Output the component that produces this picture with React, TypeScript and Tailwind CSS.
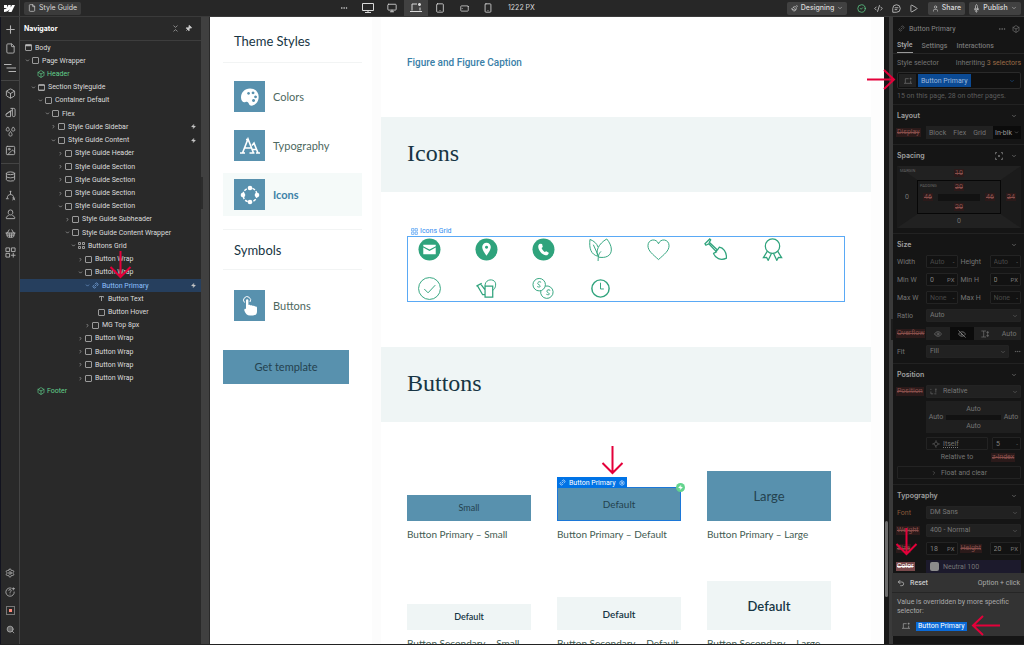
import type { ReactNode } from "react";
import {
  Box,
  ChevronDown,
  ChevronRight,
  CircleCheck,
  CodeXml,
  Database,
  Ellipsis,
  Eye,
  EyeOff,
  File,
  Image,
  Link2,
  Monitor,
  Paintbrush,
  Pin,
  Play,
  Plus,
  Rocket,
  Search,
  Settings,
  ShoppingBasket,
  Smartphone,
  Tablet,
  Undo2,
  User,
  Zap,
} from "lucide-react";

type NodeKind = "body" | "section" | "box" | "component" | "grid" | "link" | "text";

type TreeNode = {
  name: string;
  level: number;
  kind: NodeKind;
  open?: boolean;
  bolt?: boolean;
  selected?: boolean;
};

const tree: TreeNode[] = [
  { name: "Body", level: 0, kind: "body" },
  { name: "Page Wrapper", level: 1, kind: "box", open: true },
  { name: "Header", level: 2, kind: "component" },
  { name: "Section Styleguide", level: 2, kind: "section", open: true },
  { name: "Container Default", level: 3, kind: "box", open: true },
  { name: "Flex", level: 4, kind: "box", open: true },
  { name: "Style Guide Sidebar", level: 5, kind: "box", open: false, bolt: true },
  { name: "Style Guide Content", level: 5, kind: "box", open: true, bolt: true },
  { name: "Style Guide Header", level: 6, kind: "box", open: false },
  { name: "Style Guide Section", level: 6, kind: "box", open: false },
  { name: "Style Guide Section", level: 6, kind: "box", open: false },
  { name: "Style Guide Section", level: 6, kind: "box", open: false },
  { name: "Style Guide Section", level: 6, kind: "box", open: true },
  { name: "Style Guide Subheader", level: 7, kind: "box", open: false },
  { name: "Style Guide Content Wrapper", level: 7, kind: "box", open: true },
  { name: "Buttons Grid", level: 8, kind: "grid", open: true },
  { name: "Button Wrap", level: 9, kind: "box", open: false },
  { name: "Button Wrap", level: 9, kind: "box", open: true },
  { name: "Button Primary", level: 10, kind: "link", open: true, bolt: true, selected: true },
  { name: "Button Text", level: 11, kind: "text" },
  { name: "Button Hover", level: 11, kind: "box" },
  { name: "MG Top 8px", level: 10, kind: "box", open: false },
  { name: "Button Wrap", level: 9, kind: "box", open: false },
  { name: "Button Wrap", level: 9, kind: "box", open: false },
  { name: "Button Wrap", level: 9, kind: "box", open: false },
  { name: "Button Wrap", level: 9, kind: "box", open: false },
  { name: "Footer", level: 2, kind: "component" },
];

function NodeIcon({ kind }: { kind: NodeKind }) {
  if (kind === "component") return <Box size={8} className="-mx-px shrink-0" />;
  if (kind === "link") return <Link2 size={7} className="shrink-0 -rotate-45" />;
  return (
    <svg width="7" height="7" viewBox="0 0 14 14" fill="none" stroke="currentColor" strokeWidth="1.6" className="shrink-0 opacity-80">
      {kind === "text" && <path d="M3 5V3h8v2M7 3v9" />}
      {kind === "grid" && <path d="M1 1h4v4H1zM9 1h4v4H9zM1 9h4v4H1zM9 9h4v4H9z" />}
      {(kind === "box" || kind === "section" || kind === "body") && <rect x="1" y="1" width="12" height="12" rx="1" />}
      {kind === "body" && <path d="M1 3h12" strokeWidth="3" />}
      {kind === "section" && <path d="M1 3h12M1 12h12" />}
    </svg>
  );
}

function TreeRow({ node }: { node: TreeNode }) {
  const color = node.selected
    ? "bg-[#263f5e] text-[#8fc1ff]"
    : node.kind === "component"
      ? "text-[#62d08c]"
      : "text-[#dcdcdc]";
  const indent = node.level === 0 ? 5 : Math.round((node.level * 20) / 3) - 2;
  return (
    <li className={`flex min-h-0 ${color}`}>
      <button type="button" className="flex min-w-0 flex-1 items-center text-left whitespace-nowrap" style={{ paddingLeft: indent }}>
        {node.level > 0 && (
          <span className="mr-0.5 w-[5px] shrink-0 opacity-80">
            {node.open === true && <ChevronDown size={5} strokeWidth={3} />}
            {node.open === false && <ChevronRight size={5} strokeWidth={3} />}
          </span>
        )}
        <NodeIcon kind={node.kind} />
        <span className="ml-[3px]">{node.name}</span>
        {node.bolt && <Zap size={5} fill="currentColor" className="mr-[5px] ml-auto text-[#c8c8c8]" />}
      </button>
    </li>
  );
}

function Glyph({ d, size = 11 }: { d: string; size?: number }) {
  return (
    <svg width={size} height={size} viewBox="0 0 24 24" fill="none" stroke="currentColor" strokeWidth="2">
      <path d={d} />
    </svg>
  );
}

const railGroups: { label: string; icon: ReactNode }[][] = [
  [
    { label: "Add elements", icon: <Plus size={13} /> },
    { label: "Pages", icon: <File size={11} /> },
    { label: "Navigator", icon: <Glyph size={12} d="M0 5h15M5 12h19M9 19h15" /> },
  ],
  [
    { label: "Components", icon: <Box size={11} /> },
    { label: "Variables", icon: <Glyph d="M12 3h7a3 3 0 0 1 3 3v12a3 3 0 0 1-6 0V3M12 8v13H5a3 3 0 0 1-3-3v-2zM2 16l14-9" /> },
    { label: "Style selectors", icon: <Glyph d="M6 2c5 6 4 9 0 9S1 8 6 2zM18 2c5 6 4 9 0 9s-5-3 0-9zM12 12c5 6 4 10 0 10s-5-4 0-10z" /> },
    { label: "Assets", icon: <Image size={11} /> },
  ],
  [
    { label: "CMS", icon: <Database size={11} /> },
    { label: "Logic", icon: <Glyph d="M12 2v8M12 10c-4 0-7 2-7 8M12 10c4 0 7 2 7 8M10 3h4M2 19h6M16 17l6 5M22 17l-6 5" /> },
    { label: "Users", icon: <Glyph d="M12 2a5 5 0 0 1 5 5c0 4-2 6-5 6s-5-2-5-6a5 5 0 0 1 5-5zM8 13l-5 5v3h18v-3l-5-5" /> },
    { label: "Ecommerce", icon: <ShoppingBasket size={11} /> },
    { label: "Apps", icon: <Glyph d="M2 2h8v8H2zM14 2h8v8h-8zM2 14h8v8H2zM18 13v10M13 18h10" /> },
  ],
];

function RailButton({ label, children }: { label: string; children: ReactNode }) {
  return (
    <button type="button" aria-label={label} className="flex h-[19px] w-full items-center justify-center">
      {children}
    </button>
  );
}

function Rail() {
  return (
    <nav className="flex w-5 shrink-0 flex-col border-r border-[#444] border-l border-l-[#12131f] bg-[#292929] text-[#b4b4b4]">
      {railGroups.map((group, i) => (
        <div key={i} className={`py-[3px] ${i < 2 ? "border-b border-[#444]" : ""}`}>
          {group.map((item) => (
            <RailButton key={item.label} label={item.label}>
              {item.icon}
            </RailButton>
          ))}
        </div>
      ))}
      <div className="mt-auto pb-[5px]">
        <RailButton label="Settings">
          <Settings size={10} />
        </RailButton>
        <RailButton label="Help">
          <Glyph size={10} d="M16 3a10 10 0 1 0 6 8M9 9c0-4 6-4 6 0 0 2-3 2-3 5M12 16v2M20 1v7M17 4h7" />
        </RailButton>
        <RailButton label="Record">
          <svg width="9" height="9" viewBox="0 0 9 9">
            <rect x="0.5" y="0.5" width="8" height="8" fill="none" stroke="#777" />
            <rect x="3" y="3" width="3" height="3" fill="#ff8a7a" />
          </svg>
        </RailButton>
        <RailButton label="Search">
          <Search size={9} fill="#666" />
        </RailButton>
      </div>
    </nav>
  );
}

function Navigator() {
  return (
    <aside className="w-[181px] shrink-0 bg-[#292929]">
      <header className="flex h-6 items-center border-b border-[#3d3d3d] px-1 text-white">
        <h2 className="font-['Inter',sans-serif] text-[7px] font-bold">Navigator</h2>
        <button type="button" aria-label="Collapse all" className="ml-auto text-[#ccc]">
          <Glyph size={7} d="M5 2l7 6 7-6M5 22l7-6 7 6" />
        </button>
        <button type="button" aria-label="Pin panel" className="mr-[5px] ml-1.5 text-[#ccc]">
          <Pin size={7} fill="currentColor" className="rotate-45" />
        </button>
      </header>
      <ul className="grid h-[357px] auto-rows-fr">
        {tree.map((node, i) => (
          <TreeRow key={i} node={node} />
        ))}
      </ul>
    </aside>
  );
}

function TopBar() {
  const device = "flex h-full w-6 items-center justify-center";
  const pill = "flex h-[13px] items-center rounded-[2px] bg-[#414141] font-medium";
  return (
    <header className="flex h-[17px] shrink-0 items-center border-b border-[#3a3a3a] bg-[#272727] font-['Inter',sans-serif] text-[#d9d9d9]">
      <div className="flex w-[332px] shrink-0 items-center">
        <a href="#" aria-label="Dashboard" className="flex h-4 w-5 items-center justify-center border-r border-[#444]">
          <svg width="11" height="7" viewBox="0 0 22 14" fill="#fff">
            <path d="M22 0l-7 14H8.400l3-5.700C9 11.500 5.200 13.700 0 14V8.400s3.500-.2 5.500-2.400H0V0h6.200v5.100L8.700 0h4.700v5.100L16 0z" />
          </svg>
        </a>
        <button type="button" className="ml-1 flex h-[13px] items-center gap-[3px] rounded-[2px] bg-[#3b3b3b] px-1">
          <File size={8} />
          Style Guide
        </button>
      </div>
      <button type="button" aria-label="More" className={device}><Ellipsis size={8} /></button>
      <button type="button" aria-label="Large desktop" className={device}>
        <Glyph size={12} d="M1 3h22v14H1zM12 17v4M6 21h12" />
      </button>
      <button type="button" aria-label="Desktop" className={device}><Monitor size={10} /></button>
      <button type="button" aria-label="Base breakpoint" className={`${device} bg-[#414141]`}>
        <Glyph size={12} d="M14 4H4v13M20 11v6M0 19h24M19 2v6M16 5h6M17 3l4 4M21 3l-4 4" />
      </button>
      <button type="button" aria-label="Tablet" className={device}><Tablet size={10} /></button>
      <button type="button" aria-label="Mobile landscape" className={device}><Smartphone size={9} className="rotate-90" /></button>
      <button type="button" aria-label="Mobile portrait" className={device}><Smartphone size={10} /></button>
      <span className="ml-2 whitespace-nowrap">1222 PX</span>
      <div className="ml-auto flex items-center pr-[3px]">
        <button type="button" className={`${pill} w-[60px] justify-center gap-[3px]`}>
          <Paintbrush size={7} />
          Designing
          <ChevronDown size={6} />
        </button>
        <button type="button" aria-label="Audit" className="ml-[10px] text-[#5fd18b]"><CircleCheck size={9} /></button>
        <button type="button" aria-label="Export code" className="ml-2"><CodeXml size={9} /></button>
        <button type="button" aria-label="Comments" className="ml-[9px]">
          <Glyph size={9} d="M2 22V12A10 10 0 1 1 12 22zM7 10h10M7 15h7" />
        </button>
        <button type="button" aria-label="Preview" className="ml-2"><Play size={9} /></button>
        <button type="button" className={`${pill} ml-[10px] w-[37px] justify-center gap-[3px]`}>
          <User size={7} />
          Share
        </button>
        <button type="button" className={`${pill} ml-1 w-[52px] justify-center gap-[3px]`}>
          <Rocket size={7} className="-rotate-45" />
          Publish
          <ChevronDown size={6} />
        </button>
      </div>
    </header>
  );
}

function GuideLink({ label, active, children }: { label: string; active?: boolean; children: ReactNode }) {
  return (
    <a href="#" className={`flex h-[43px] items-center pl-[11px] text-[11px] ${active ? "bg-[#f5faf9] font-bold text-[#3d82a8]" : "text-[#4d6860]"}`}>
      <span className="mr-2 flex size-[31px] items-center justify-center bg-[#5891ae]">
        <svg width="20" height="20" viewBox="0 0 20 20" fill="#fff">
          {children}
        </svg>
      </span>
      {label}
    </a>
  );
}

function GuideSidebar() {
  return (
    <aside className="w-[171px] shrink-0 border-r-[9px] border-[#fcfcfc] pl-[13px]">
      <div className="pr-[10px]">
        <h2 className="flex h-[46px] items-center border-b border-[#f2f4f4] pt-[3px] pl-[11px] text-[13px] text-[#173544]">Theme Styles</h2>
        <nav className="mt-3 flex flex-col gap-1.5">
          <GuideLink label="Colors">
            <path fillRule="evenodd" d="M10 1.500C4.500 1.500 1 5.500 1 10.500c0 3.500 2.500 5.500 4.500 4.500 2-.800 3 .5 3.500 2 .8 2.500 4.500 2 7-.5C21 11.500 19 1.500 10 1.500zM8.500 5a1.400 1.400 0 1 0 .1 0zM13 4.500a1.400 1.400 0 1 0 .1 0zM15.500 8.500a1.400 1.400 0 1 0 .1 0zM13.500 12a1.500 1.500 0 1 0 .1 0z" />
          </GuideLink>
          <GuideLink label="Typography">
            <path fill="none" stroke="#fff" strokeWidth="1.600" d="M0 17h5M2.500 17L8 3l5.500 14M4.500 12h7M9.500 17h5M12 9.500L14 7l4 10M12.500 13.500h4M16 17h4M6 3.500h2.500" />
          </GuideLink>
          <GuideLink label="Icons" active>
            <circle cx="10" cy="10" r="7" fill="none" stroke="#fff" strokeWidth="1.500" strokeDasharray="3 1.400" />
            <circle cx="10" cy="3" r="2.300" />
            <circle cx="10" cy="17" r="2.300" />
            <circle cx="3" cy="10" r="2.300" />
            <circle cx="17" cy="10" r="2.300" />
          </GuideLink>
        </nav>
        <h2 className="mt-[13px] mb-[14px] flex h-[41px] items-center border-y border-[#f2f4f4] pl-[11px] text-[13px] text-[#173544]">Symbols</h2>
        <GuideLink label="Buttons">
          <path fill="none" stroke="#fff" d="M4.500 6.500a3.500 3.500 0 1 1 5.500-.500" />
          <path d="M6 4.500a1.200 1.200 0 0 1 2.400 0V9c.8-.600 2-.400 2.300.4.8-.500 1.900-.300 2.200.6.900-.400 1.900-.200 2.100.5.900-.300 2 .100 2 1.200v3.800c0 2.500-1.500 4-4 4h-3c-3 0-4.500-2-5.500-4.500-.6-1.600.3-2.500 1.500-2z" />
        </GuideLink>
      </div>
      <button type="button" className="mt-[23px] h-[34px] w-[126px] bg-[#5891ae] text-[11px] text-[#24424f]">Get template</button>
    </aside>
  );
}

function Badge({ children }: { children: ReactNode }) {
  return (
    <svg viewBox="0 0 24 24" className="size-[23px]">
      <circle cx="12" cy="12" r="11.500" fill="#2fa37c" />
      {children}
    </svg>
  );
}

function Outline({ d, children }: { d?: string; children?: ReactNode }) {
  return (
    <svg viewBox="0 0 24 24" className="size-[23px]" fill="none" stroke="#2fa37c">
      {d && <path d={d} />}
      {children}
    </svg>
  );
}

function IconsGrid() {
  return (
    <div className="relative border border-[#5aa9f5] py-px pr-[60px] pl-2.5">
      <span className="absolute -top-[11px] left-[3px] flex items-center gap-0.5 font-['Roboto',sans-serif] text-[7px] leading-[10px] text-[#2f8cf0]">
        <Glyph size={7} d="M2 2h8v8H2zM14 2h8v8h-8zM2 14h8v8H2zM14 14h8v8h-8z" />
        Icons Grid
      </span>
      <div className="grid grid-cols-[repeat(7,23px)] justify-between gap-y-4">
        <Badge>
          <path fill="#fff" d="M5.500 7h13v1.500L12 12 5.500 8.500zM5.500 10L12 13.500 18.500 10v7h-13z" />
        </Badge>
        <Badge>
          <path fill="#fff" fillRule="evenodd" d="M12 5a4.500 4.500 0 0 1 4.500 4.500C16.500 13 12 18.500 12 18.500S7.500 13 7.500 9.500A4.500 4.500 0 0 1 12 5zm0 3a1.600 1.600 0 1 0 .1 0z" />
        </Badge>
        <Badge>
          <path fill="#fff" d="M8.500 6l2 .300.800 3-1.300 1.200c.5 1.500 1.600 2.900 3.200 4l1.700-.800 2.600 1.800c-.2 2-1.500 3-3.500 2.500C10 16.800 6.800 13 6.500 9c0-1.500.8-2.800 2-3z" />
        </Badge>
        <Outline d="M9 19C2 17 0 11 1 1.500c4 1.500 7 4 8.500 8M10 20C6 14 10 6 18.500 1c6 7 6.500 15 1 18-3 1.500-6 1.500-9.500 1zM9.500 24c0-6 1-8 3-10M9.500 18L4.500 7" />
        <Outline d="M12 22.500C6 17 1 13.500 1 8c0-7 9-8 11-2 2-6 11-5 11 2 0 5.500-5 9-11 14.500z" />
        <Outline>
          <path strokeWidth="1.300" d="M1 6l5-5 1 1-1.500 2.500 8.500 8 2-3c4 .500 7.500 5 7.500 11.500-6 3-12 0-13.500-5l3-1.500-8-8.500L2 7.500zM13.500 12.500L12 14.500" />
        </Outline>
        <Outline>
          <path strokeWidth="1.300" d="M6.500 14L2.500 20.500l3.300-.2 1.700 3 3.500-7.300M17.500 14l4 6.500-3.300-.2-1.700 3-3.500-7.300" />
          <circle cx="12" cy="8.500" r="7.500" strokeWidth="1.300" />
        </Outline>
        <Outline d="M6.500 12.500l4 4 7.500-8">
          <circle cx="12" cy="12" r="11.400" />
        </Outline>
        <Outline>
          <path strokeWidth="1.300" d="M10.500 9.500h8V21h-8zM2.500 9l5.500 9.500h2.500M6 7.500l4.500 6M1.500 9.500l5.500-3" />
          <path d="M10.500 9.500C10 1 22.500 1 21.500 8.500c0 2.500-1.500 4.500-3 5.500" />
        </Outline>
        <Outline d="M9.500 5.500C7 3.500 4.500 7 7 8s2 3.500-1.500 2M19 14c-2.500-2-5 1-2.500 2.200s2 3.300-1.500 1.800">
          <circle cx="7.500" cy="8" r="6.500" />
          <path d="M14 9.500a6.500 6.500 0 1 1-4.800 4.800" />
        </Outline>
        <Outline d="M12 6v6.500h3.500">
          <circle cx="12" cy="12" r="9" strokeWidth="1.500" />
        </Outline>
      </div>
    </div>
  );
}

const samples = [
  { label: "Small", caption: "Button Primary – Small", look: "h-[26px] bg-[#5891ae] text-[9px] text-[#24424f]" },
  { label: "Default", caption: "Button Primary – Default", look: "h-[34px] bg-[#5891ae] text-[10px] text-[#24424f] border border-[#1c78d8]", selected: true },
  { label: "Large", caption: "Button Primary – Large", look: "h-[50px] bg-[#5891ae] text-[13px] text-[#24424f]" },
  { label: "Default", caption: "Button Secondary – Small", look: "h-[26px] bg-[#eff5f5] text-[9px] font-semibold text-[#173544]" },
  { label: "Default", caption: "Button Secondary – Default", look: "h-[33px] bg-[#eff5f5] text-[10px] font-semibold text-[#173544]" },
  { label: "Default", caption: "Button Secondary – Large", look: "h-[49px] bg-[#eff5f5] text-[13px] font-semibold text-[#173544]" },
];

function SelectedTag() {
  return (
    <>
      <span className="absolute -top-2.5 left-0 flex h-[11px] items-center gap-[3px] bg-[#0073e6] px-0.5 font-['Roboto',sans-serif] text-[7px] whitespace-nowrap text-white">
        <Link2 size={7} className="-rotate-45" />
        Button Primary
        <Settings size={6} />
      </span>
      <span className="absolute -top-1 -right-1 flex size-[9px] items-center justify-center rounded-full bg-[#63d48d]">
        <Zap size={5} fill="#fff" stroke="#fff" />
      </span>
    </>
  );
}

function Canvas() {
  const band = "flex h-[75px] items-center bg-[#eff5f5] px-[26px] pb-1 text-2xl text-[#173544] font-['Liberation_Serif',serif]";
  return (
    <main className="flex min-w-0 flex-1 overflow-hidden bg-white font-['Lato',sans-serif]">
      <GuideSidebar />
      <div className="min-w-0 flex-1">
        <p className="flex h-[100px] items-center px-[26px] pb-2 font-['Roboto',sans-serif] text-[10px] font-medium text-[#3a80a8]">Figure and Figure Caption</p>
        <h1 className={band}>Icons</h1>
        <section className="h-[155px] px-[26px] pt-11">
          <IconsGrid />
        </section>
        <h1 className={band}>Buttons</h1>
        <section className="grid grid-cols-3 items-end gap-x-[26px] gap-y-10 px-[26px] pt-[49px] pr-10">
          {samples.map((s) => (
            <figure key={s.caption}>
              <div className="relative">
                <button type="button" className={`block w-full ${s.look}`}>{s.label}</button>
                {s.selected && <SelectedTag />}
              </div>
              <figcaption className="mt-1.5 text-[10px] leading-[14px] whitespace-nowrap text-[#3f5b52]">{s.caption}</figcaption>
            </figure>
          ))}
        </section>
      </div>
      <div className="w-[13px] shrink-0 bg-[#fdfdfd]" />
    </main>
  );
}

const fieldBox = "h-[13px] rounded-[1px] border border-[#232323]";

function Overridden({ htmlFor, children }: { htmlFor?: string; children: ReactNode }) {
  return (
    <label htmlFor={htmlFor} className="-ml-px justify-self-start bg-[#2b1a1a] px-px leading-[9px] text-[#874e4a] line-through">
      {children}
    </label>
  );
}

function Dropdown({ id, value, icon }: { id: string; value: string; icon?: ReactNode }) {
  return (
    <span className="relative flex min-w-0">
      <select id={id} className={`${fieldBox} w-full appearance-none bg-[#212121] leading-[11px] text-[#777] ${icon ? "pl-4" : "pl-[3px]"}`}>
        <option>{value}</option>
      </select>
      {icon && <span className="pointer-events-none absolute top-[3px] left-1">{icon}</span>}
      <ChevronDown size={6} className="pointer-events-none absolute top-1 right-[3px]" />
    </span>
  );
}

function Field({ id, value, unit }: { id: string; value: string; unit: string }) {
  return (
    <span className={`flex min-w-0 items-center bg-[#121212] pr-0.5 pl-[3px] ${fieldBox}`}>
      <input id={id} defaultValue={value} className={`w-full min-w-0 bg-transparent outline-none ${value === "Auto" || value === "None" ? "text-[#484848]" : "text-[#808080]"}`} />
      <span className="text-[6px] text-[#777]">{unit}</span>
    </span>
  );
}

function Section({ title, extra, children }: { title: string; extra?: ReactNode; children: ReactNode }) {
  return (
    <section className="border-b border-[#222] pr-[3px] pb-[5px] pl-1">
      <h3 className="flex h-[21px] items-center font-['Inter',sans-serif] text-[7px] font-semibold text-[#a0a0a0]">
        {title}
        <span className="ml-auto flex items-center gap-2 pr-1">
          {extra}
          <ChevronDown size={6} />
        </span>
      </h3>
      {children}
    </section>
  );
}

function SpacingBox() {
  const mark = "justify-self-center bg-[#2b1a1a] px-px leading-[8px] text-[#874e4a] line-through";
  return (
    <div className="relative grid h-[62px] grid-cols-[20px_1fr_20px] grid-rows-[14px_1fr_14px] place-items-center bg-[#212121]">
      <svg className="absolute inset-0 size-full" viewBox="0 0 124 63" preserveAspectRatio="none">
        <path d="M0 0l20 14v35L0 63zM124 0l-20 14v35l20 14z" fill="#1b1b1b" />
      </svg>
      <span className="relative self-start justify-self-start pt-0.5 pl-[3px] text-[4px] leading-[6px] text-[#666]">MARGIN</span>
      <span className={`relative ${mark}`}>10</span>
      <span />
      <span className="relative">0</span>
      <div className="relative grid size-full grid-cols-[20px_1fr_20px] grid-rows-[12px_1fr_12px] place-items-center border border-[#070707] bg-[#1d1d1d]">
        <span className="self-start justify-self-start pt-0.5 pl-0.5 text-[4px] leading-[5px] text-[#666]">PADDING</span>
        <span className={mark}>20</span>
        <span />
        <span className={mark}>46</span>
        <span className="h-[7px] w-full bg-[#121212]" />
        <span className={mark}>46</span>
        <span />
        <span className={mark}>20</span>
        <span />
      </div>
      <span className={`relative ${mark}`}>24</span>
      <span />
      <span className="relative">0</span>
      <span />
    </div>
  );
}

function OverrideNote() {
  return (
    <div className="absolute right-0 bottom-2 left-[-1px] bg-[#333] text-[#c9c9c9]">
      <div className="flex h-5 items-center gap-[5px] border-b border-[#262626] pr-1 pl-[5px]">
        <Undo2 size={8} />
        <button type="button" className="font-medium">Reset</button>
        <span className="ml-auto text-[#aaa]">Option + click</span>
      </div>
      <p className="px-[5px] pt-[5px] leading-[9px] text-[#aaa]">
        Value is overridden by more specific selector:
      </p>
      <div className="flex h-5 items-center gap-1.5 pl-2.5 text-[#aaa]">
        <Glyph size={8} d="M14 5H4v13M20 11v7M0 19h24M17 5h6M20 2v6" />
        <span className="bg-[#0a6ad8] px-0.5 leading-[9px] text-white">Button Primary</span>
      </div>
    </div>
  );
}

function StylePanel() {
  const row = "grid grid-cols-[29px_minmax(0,1fr)] items-center";
  const sizeRow = "grid grid-cols-[26px_minmax(0,1fr)_26px_minmax(0,1fr)] items-center gap-x-[3px]";
  return (
    <aside className="relative w-[131px] shrink-0 bg-[#151515] text-[#747474]">
      <div className="h-full overflow-hidden">
        <header className="flex h-[21px] items-center gap-1 px-1 pt-0.5 pl-[5px]">
          <Link2 size={7} className="-rotate-45" />
          <span className="text-[#858585]">Button Primary</span>
          <button type="button" aria-label="More" className="ml-auto"><Ellipsis size={8} /></button>
          <button type="button" aria-label="Create component" className="ml-0.5"><Box size={8} /></button>
        </header>
        <nav className="flex h-4 gap-[9px] border-b border-[#262626] pl-1 font-medium">
          <button type="button" className="border-b border-[#999] text-[#aaa]">Style</button>
          <button type="button">Settings</button>
          <button type="button">Interactions</button>
        </nav>
        <div className="border-b border-[#222] pr-[3px] pl-1">
          <div className="flex h-[18px] items-center justify-between whitespace-nowrap">
            <span>Style selector</span>
            <span>Inheriting <a href="#" className="text-[#9c6b46]">3 selectors</a></span>
          </div>
          <div className="flex h-[17px] items-center rounded-[2px] border border-[#2a2a2a] bg-[#101010] p-px">
            <button type="button" aria-label="Breakpoint" className="flex h-[13px] w-[17px] items-center justify-center bg-[#222]">
              <Glyph size={8} d="M14 5H4v13M20 11v7M0 19h24M17 5h6M20 2v6" />
            </button>
            <button type="button" className="ml-0.5 h-[13px] bg-[#0b4a94] px-[3px] text-[#9db9dc]">Button Primary</button>
            <ChevronDown size={6} className="mr-1 ml-auto text-[#1d5ea8]" />
          </div>
          <p className="h-[15px] pt-px leading-[12px] whitespace-nowrap text-[#5c5c5c]">15 on this page, 28 on other pages.</p>
        </div>

        <Section title="Layout">
          <div className={row}>
            <Overridden>Display</Overridden>
            <div className="flex h-[13px] items-center justify-between bg-[#212121] pl-[3px]">
              <button type="button">Block</button>
              <button type="button">Flex</button>
              <button type="button">Grid</button>
              <button type="button" className="flex h-[13px] items-center gap-0.5 bg-[#0b0b0b] px-0.5 text-[#999]">
                In-blk
                <ChevronDown size={5} />
              </button>
            </div>
          </div>
        </Section>

        <Section title="Spacing" extra={<Glyph size={8} d="M1 7V2h5M18 2h5v5M23 17v5h-5M6 22H1v-5M9 12h6M12 9v6" />}>
          <SpacingBox />
        </Section>

        <Section title="Size">
          <div className="flex flex-col gap-[5px]">
            <div className={sizeRow}>
              <label htmlFor="width">Width</label>
              <Field id="width" value="Auto" unit="-" />
              <label htmlFor="height">Height</label>
              <Field id="height" value="Auto" unit="-" />
            </div>
            <div className={sizeRow}>
              <label htmlFor="min-w">Min W</label>
              <Field id="min-w" value="0" unit="PX" />
              <label htmlFor="min-h">Min H</label>
              <Field id="min-h" value="0" unit="PX" />
            </div>
            <div className={sizeRow}>
              <label htmlFor="max-w">Max W</label>
              <Field id="max-w" value="None" unit="-" />
              <label htmlFor="max-h">Max H</label>
              <Field id="max-h" value="None" unit="-" />
            </div>
            <div className={row}>
              <label htmlFor="ratio">Ratio</label>
              <Dropdown id="ratio" value="Auto" />
            </div>
            <div className={row}>
              <Overridden>Overflow</Overridden>
              <div className="grid h-[13px] grid-cols-4 place-items-center bg-[#212121]">
                <button type="button" aria-label="Visible"><Eye size={8} /></button>
                <button type="button" aria-label="Hidden" className="flex size-full items-center justify-center bg-[#0b0b0b] text-[#999]"><EyeOff size={8} /></button>
                <button type="button" aria-label="Scroll"><Glyph size={8} d="M1 3h14M1 21h14M8 3v18M20 3v18M16 7h8M16 17h8" /></button>
                <button type="button">Auto</button>
              </div>
            </div>
            <div className="grid grid-cols-[29px_minmax(0,1fr)_12px] items-center">
              <label htmlFor="fit">Fit</label>
              <Dropdown id="fit" value="Fill" />
              <button type="button" aria-label="More size options" className="justify-self-end"><Ellipsis size={7} /></button>
            </div>
          </div>
        </Section>

        <Section title="Position">
          <div className={row}>
            <Overridden htmlFor="position">Position</Overridden>
            <Dropdown id="position" value="Relative" icon={<Glyph size={7} d="M3 3v4M3 12v8h8M15 20h7M20 4v12M17 4h6" />} />
          </div>
          <div className="mt-[3px] ml-[29px] grid h-8 grid-cols-[20px_1fr_20px] grid-rows-[11px_6px_11px] content-center place-items-center bg-[#1f1f1f]">
            <span className="col-span-3">Auto</span>
            <span>Auto</span>
            <span className="h-[5px] w-full bg-[#121212]" />
            <span>Auto</span>
            <span className="col-span-3">Auto</span>
          </div>
          <div className="mt-1 ml-[29px] grid grid-cols-[62px_minmax(0,1fr)] gap-x-1">
            <button type="button" className={`${fieldBox} flex items-center gap-[3px] pl-[5px]`}>
              <Glyph size={8} d="M12 5l7 7-7 7-7-7zM12 1v4M12 19v4M1 12h4M19 12h4" />
              <span className="underline decoration-dotted">Itself</span>
            </button>
            <Field id="z-index" value="5" unit="-" />
            <span className="text-center leading-[14px]">Relative to</span>
            <span className="grid place-items-center">
              <Overridden htmlFor="z-index">z-Index</Overridden>
            </span>
          </div>
          <button type="button" className={`${fieldBox} mt-0.5 flex w-full items-center justify-center gap-1`}>
            <ChevronRight size={6} />
            Float and clear
          </button>
        </Section>

        <Section title="Typography">
          <div className="flex flex-col gap-[5px]">
            <div className={row}>
              <label htmlFor="font" className="text-[#8a5a3a]">Font</label>
              <Dropdown id="font" value="DM Sans" />
            </div>
            <div className={row}>
              <Overridden htmlFor="weight">Weight</Overridden>
              <Dropdown id="weight" value="400 - Normal" />
            </div>
            <div className={sizeRow}>
              <Overridden htmlFor="size">Size</Overridden>
              <Field id="size" value="18" unit="PX" />
              <Overridden htmlFor="line-height">Height</Overridden>
              <Field id="line-height" value="20" unit="PX" />
            </div>
            <div className={row}>
              <label htmlFor="color" className="-ml-px justify-self-start bg-[#7a4a4c] px-px leading-[9px] text-white line-through">Color</label>
              <button id="color" type="button" className="flex h-[13px] items-center gap-1 bg-[#1c1a2c] pl-1">
                <span className="size-[9px] rounded-[2px] bg-[#8c8c8c]" />
                Neutral 100
              </button>
            </div>
          </div>
        </Section>
      </div>
      <OverrideNote />
    </aside>
  );
}

// Red callout arrows drawn over the whole editor
function Arrows() {
  return (
    <svg width="1024" height="645" className="pointer-events-none absolute top-0 left-0" fill="none" stroke="#e4003a" strokeWidth="2">
      <path d="M120.500 251v26M110.500 267l10 10 10-10" />
      <path d="M612.500 446v27M602.500 463l10 10 10-10" />
      <path d="M867 79.500h27M884 70l10 9.500-10 9.500" />
      <path d="M906.500 528v26M896.500 544l10 10 10-10" />
      <path d="M1000 625.500h-26M983 616l-10 9.500 10 9.500" />
    </svg>
  );
}

export default function App() {
  return (
    <div className="relative flex h-screen flex-col overflow-hidden border-b border-[#222] bg-[#292929] font-['Roboto',sans-serif] text-[7px] leading-[10px]">
      <TopBar />
      <div className="flex min-h-0 flex-1">
        <Rail />
        <Navigator />
        <div className="w-[9px] shrink-0 border-r border-[#2a2a2a] bg-[#404040] pt-40">
          <div className="h-8 w-0.5 bg-[#2c2c2c]" />
        </div>
        <Canvas />
        <div className="flex w-[5px] shrink-0 justify-center bg-[#181818] pt-[504px]">
          <div className="h-[76px] w-[3px] rounded-full bg-[#6c6c6c]" />
        </div>
        <div className="w-1 shrink-0 bg-[#3a3a3a] pt-[302px]">
          <div className="ml-0.5 h-[21px] w-0.5 bg-[#1c1c1c]" />
        </div>
        <StylePanel />
      </div>
      <Arrows />
    </div>
  );
}
